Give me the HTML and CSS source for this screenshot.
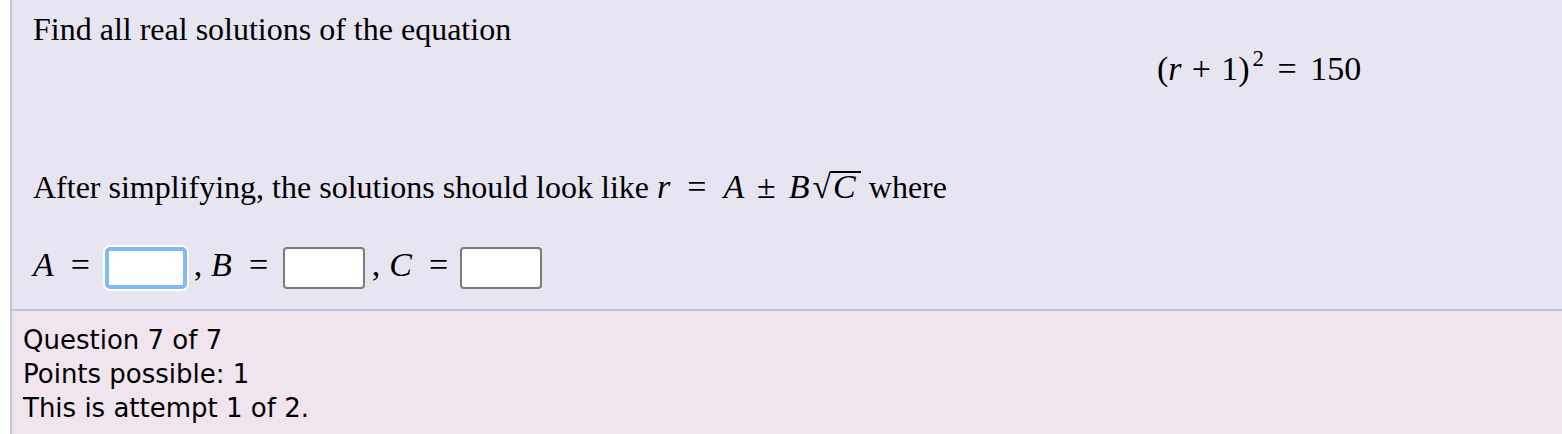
FILE: index.html
```html
<!DOCTYPE html>
<html>
<head>
<meta charset="utf-8">
<link rel="stylesheet" href="styles.css">
</head>
<body>
<div class="question">
  <div class="qtext">
    <p class="line first">Find all real solutions of the equation</p>
    <div class="display"><span class="math">(<i>r</i><span class="bin">+</span>1)<sup class="sq">2</sup><span class="rel">=</span>150</span></div>
    <p class="line second">After simplifying, the solutions should look like <span class="math wide"><i>r</i><span class="rel">=</span><i>A</i><span class="bin">±</span><i>B</i><span class="sqrt"><span class="rad">√</span><span class="over"><i>C</i></span></span></span> where</p>
    <div class="answers">
      <span class="t math wide"><i>A</i><span class="rel">=</span></span>
      <input class="box focus" type="text">
      <span class="t math wide"><span class="comma">,</span><i>B</i><span class="rel">=</span></span>
      <input class="box" type="text">
      <span class="t math wide"><span class="comma">,</span><i>C</i><span class="rel">=</span></span>
      <input class="box last" type="text">
    </div>
  </div>
  <div class="info">
    <div>Question 7 of 7</div>
    <div>Points possible: 1</div>
    <div>This is attempt 1 of 2.</div>
  </div>
</div>
</body>
</html>
```
FILE: styles.css
```css
html, body {
  margin: 0;
  padding: 0;
  background: #ffffff;
}
.question {
  margin-left: 10px;
  border-left: 2px solid #c2c2e0;
  height: 434px;
  display: flex;
  flex-direction: column;
}
.qtext {
  background: #e8e5f2;
  height: 311px;
  box-sizing: border-box;
  padding: 12px 0 0 21px;
  font-family: "Liberation Serif", "Times New Roman", serif;
  font-size: 32px;
  color: #000;
  border-bottom: 2px solid #c2c2e0;
}
.line {
  margin: 0;
  line-height: 34px;
  white-space: nowrap;
}
.display {
  margin-top: 6px;
  line-height: 34px;
  padding-left: 1124px;
  white-space: nowrap;
}
.second {
  margin-top: 80px;
}
.math {
  font-size: 34px;
  white-space: nowrap;
}
.math i {
  font-style: italic;
}
.bin {
  display: inline-block;
  margin: 0 0.3em;
}
.rel {
  display: inline-block;
  margin: 0 0.4em;
}
.wide .rel {
  margin: 0 0.5em;
}
.wide .bin {
  margin: 0 0.38em;
}
.sq {
  font-size: 23px;
  vertical-align: 0;
  position: relative;
  top: -14px;
  margin-left: 3px;
}
.sqrt {
  display: inline-block;
  margin-left: 2px;
}
.rad {
  display: inline-block;
  margin-left: 1px;
}
.over {
  display: inline-block;
  border-top: 2px solid #000;
  line-height: 28px;
  padding: 0 5px 0 2px;
}
.answers {
  margin-top: 43px;
  height: 42px;
  display: flex;
  align-items: center;
}
.t {
  line-height: 28px;
  padding-bottom: 6px;
}
.t .rel {
  margin-right: 0;
}
.comma {
  margin: 0 0.26em 0 0.2em;
}
.box {
  width: 82px;
  height: 42px;
  box-sizing: border-box;
  border: 2px solid #7b7b7b;
  border-radius: 4px;
  background: #ffffff;
  margin: 0 0 0 15px;
  padding: 0;
  outline: none;
}
.box.last {
  margin-left: 12px;
}
.box.focus {
  border: 4px solid #82baf6;
  box-shadow: 0 0 0 2px #ffffff;
  border-radius: 5px;
  width: 82px;
}
.info {
  flex: 1;
  background: #f0e4ee;
  padding: 12px 0 0 11px;
  font-family: "DejaVu Sans", "Verdana", sans-serif;
  font-size: 26px;
  line-height: 34px;
  color: #000;
}
```
